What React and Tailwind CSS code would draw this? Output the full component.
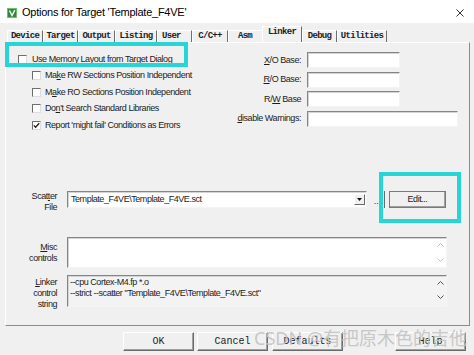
const tabs = [
    { label: "Device", w: "w-[36px]" },
    { label: "Target", w: "w-[35px]" },
    { label: "Output", w: "w-[37px]" },
    { label: "Listing", w: "w-[42px]" },
    { label: "User", w: "w-[35px] justify-start pl-[4px]" },
    { label: "C/C++", w: "w-[36px]" },
    { label: "Asm", w: "w-[34px] border-r-transparent" },
    { label: "Linker", w: "w-[40px]", active: true },
    { label: "Debug", w: "w-[35px]" },
    { label: "Utilities", w: "w-[50px]" },
];

const Check = ({ checked = false }) => (
    <span className="flex h-[9px] w-[9px] shrink-0 items-center justify-center border border-t-[#6f6f6f] border-l-[#6f6f6f] border-r-[#dcdcdc] border-b-[#dcdcdc] bg-white">
        {checked && (
            <svg width="7" height="7" viewBox="0 0 7 7">
                <path d="M0.8 3.4 L2.6 5.3 L6.2 1.2" fill="none" stroke="#1a1a1a" strokeWidth="1.3" />
            </svg>
        )}
    </span>
);

const Chevron = ({ up, color }) => (
    <svg width="7" height="4" viewBox="0 0 7 4">
        <path
            d={up ? "M0.5 3.5 L3.5 0.5 L6.5 3.5" : "M0.5 0.5 L3.5 3.5 L6.5 0.5"}
            fill="none"
            stroke={color}
            strokeWidth="1"
        />
    </svg>
);

const U = ({ children }) => <span className="underline underline-offset-[1px]">{children}</span>;

const sunken = "bg-white border border-t-[#858585] border-l-[#858585] border-r-[#f4f4f4] border-b-[#f4f4f4] shadow-[inset_1px_1px_0_#d4d4d4]";

const button = "flex items-center justify-center border border-t-white border-l-white border-r-[#6a6a6a] border-b-[#6a6a6a] shadow-[inset_-1px_-1px_0_#a0a0a0] bg-[#f0f0f0]";

export default function App() {

    return (

        <div className="relative h-[355px] w-[474px] overflow-hidden bg-[#f0f0f0] font-['Liberation_Sans',Arial,sans-serif] text-[#1c1c1c]">

            {/* title bar */}
            <div className="flex h-[23px] items-center bg-white pl-[7px] pr-[10px] pt-[2px]">
                <svg width="10" height="10" viewBox="0 0 10 10">
                    <rect x="0" y="0" width="10" height="10" fill="#2f8a3a" />
                    <rect x="0.5" y="0.5" width="9" height="9" fill="none" stroke="#6cc070" strokeWidth="1" />
                    <path d="M2.5 2.5 L5 7.5 L7.8 2.2" fill="none" stroke="#ffffff" strokeWidth="1.4" />
                </svg>
                <span className="ml-[5px] text-[11px] tracking-[-0.25px] text-black">
                    Options for Target 'Template_F4VE'
                </span>
                <svg className="ml-auto" width="8" height="8" viewBox="0 0 8 8">
                    <path d="M0.5 0.5 L7.5 7.5 M7.5 0.5 L0.5 7.5" stroke="#333" strokeWidth="1" />
                </svg>
            </div>

            {/* tabs */}
            <div className="flex h-[19px] items-end pl-[7px] font-['Liberation_Mono',monospace] text-[9px] font-bold leading-[11px] tracking-[-0.7px] text-[#1e1e1e]">
                {tabs.map((t) => (
                    <div
                        key={t.label}
                        className={
                            t.active
                                ? "flex h-[16px] w-[40px] items-start justify-center border-t border-l border-r border-t-white border-l-white border-r-[#6e6e6e]"
                                : "flex h-[12px] items-center justify-center border-t border-l border-r border-t-white border-l-white border-r-[#6e6e6e] " + t.w
                        }
                    >
                        {t.label}
                    </div>
                ))}
            </div>

            {/* panel */}
            <div className="ml-[5px] flex h-[284px] w-[465px] flex-col border border-t-white border-l-white border-r-[#8c8c8c] border-b-[#8c8c8c] text-[9px] leading-[11px] tracking-[-0.45px]">

                <div className="flex h-[148px]">

                    <div className="flex w-[224px] flex-col pt-[8px]">
                        <div className="flex h-[16.5px] items-center gap-[5px] pl-[12px]">
                            <Check />
                            <span>Use Memory Layout from Target Dialog</span>
                        </div>
                        <div className="flex h-[16.5px] items-center gap-[4px] pl-[26px]">
                            <Check />
                            <span>Ma<U>k</U>e RW Sections Position Independent</span>
                        </div>
                        <div className="flex h-[16.5px] items-center gap-[4px] pl-[26px]">
                            <Check />
                            <span>M<U>a</U>ke RO Sections Position Independent</span>
                        </div>
                        <div className="flex h-[16.5px] items-center gap-[4px] pl-[26px]">
                            <Check />
                            <span>Do<U>n</U>'t Search Standard Libraries</span>
                        </div>
                        <div className="flex h-[16.5px] items-center gap-[4px] pl-[26px]">
                            <Check checked />
                            <span>Report 'might fail' Conditions as Errors</span>
                        </div>
                    </div>

                    <div className="flex flex-col gap-[3.5px] pt-[9px]">
                        <div className="flex h-[16px] items-center">
                            <span className="w-[71px] whitespace-nowrap text-right"><U>X</U>/O Base:</span>
                            <div className={"ml-[6px] h-[16px] w-[93px] " + sunken} />
                        </div>
                        <div className="flex h-[16px] items-center">
                            <span className="w-[71px] whitespace-nowrap text-right"><U>R</U>/O Base:</span>
                            <div className={"ml-[6px] h-[16px] w-[93px] " + sunken} />
                        </div>
                        <div className="flex h-[16px] items-center">
                            <span className="w-[71px] whitespace-nowrap text-right">R/<U>W</U> Base</span>
                            <div className={"ml-[6px] h-[16px] w-[93px] " + sunken} />
                        </div>
                        <div className="flex h-[16px] items-center">
                            <span className="w-[71px] whitespace-nowrap text-right"><U>d</U>isable Warnings:</span>
                            <div className={"ml-[6px] h-[16px] w-[151px] " + sunken} />
                        </div>
                    </div>

                </div>

                {/* scatter file */}
                <div className="flex h-[17px]">
                    <div className="w-[51px] text-right">
                        <div>Scat<U>t</U>er</div>
                        <div>File</div>
                    </div>
                    <div className={"ml-[10px] flex h-[17px] w-[300px] items-center pl-[3px] pr-[1px] " + sunken}>
                        <span className="flex-1">Template_F4VE\Template_F4VE.sct</span>
                        <span className="flex h-[11px] w-[11px] items-center justify-center border border-t-white border-l-white border-r-[#6a6a6a] border-b-[#6a6a6a] bg-[#f0f0f0]">
                            <svg width="5" height="3" viewBox="0 0 5 3">
                                <path d="M0 0 L5 0 L2.5 3 Z" fill="#111" />
                            </svg>
                        </span>
                    </div>
                    <div className="ml-[4px] flex h-[17px] w-[14px] items-end justify-center border-r border-r-[#6a6a6a] pb-[1px] tracking-[0px]">
                        ...
                    </div>
                    <div className={"ml-[4px] h-[17px] w-[57px] outline outline-1 outline-[#7a7a7a] -outline-offset-1 " + button}>
                        Edit...
                    </div>
                </div>

                {/* misc controls */}
                <div className="mt-[29px] flex">
                    <div className="w-[51px] pt-[4.5px] text-right">
                        <div><U>M</U>isc</div>
                        <div>controls</div>
                    </div>
                    <div className={"ml-[10px] flex h-[31px] w-[380px] " + sunken}>
                        <div className="flex-1" />
                        <div className="flex w-[12px] flex-col items-center justify-between py-[5px]">
                            <Chevron up color="#b4b4b4" />
                            <Chevron color="#c4c4c4" />
                        </div>
                    </div>
                </div>

                {/* linker control string */}
                <div className="mt-[7px] flex">
                    <div className="w-[51px] pt-[1.5px] text-right">
                        <div><U>L</U>inker</div>
                        <div>control</div>
                        <div>string</div>
                    </div>
                    <div className="ml-[10px] flex h-[32px] w-[380px] border border-t-[#858585] border-l-[#858585] border-r-[#f4f4f4] border-b-[#f4f4f4] bg-[#f3f3f3] shadow-[inset_1px_1px_0_#d4d4d4]">
                        <div className="flex-1 pl-[2px] pt-[0.5px] whitespace-nowrap">
                            <div>--cpu Cortex-M4.fp *.o</div>
                            <div>--strict --scatter {'"'}Template_F4VE\Template_F4VE.sct{'"'}</div>
                        </div>
                        <div className="flex w-[12px] flex-col items-center justify-between pb-[7px] pt-[5px]">
                            <Chevron up color="#505050" />
                            <Chevron color="#505050" />
                        </div>
                    </div>
                </div>

            </div>

            {/* dialog buttons */}
            <div className="mt-[6px] flex h-[19px] pl-[123px] font-['Liberation_Mono',monospace] text-[10px] leading-[12px]">
                <div className={"w-[71px] " + button}>OK</div>
                <div className={"ml-[3px] w-[71px] " + button}>Cancel</div>
                <div className={"ml-[4px] w-[71px] " + button}>Defaults</div>
                <div className={"ml-[52px] w-[71px] " + button}>Help</div>
            </div>

            {/* annotation boxes */}
            <div className="absolute left-[5px] top-[42px] h-[25px] w-[183px] border-[4px] border-[#27d4d6]" />
            <div className="absolute left-[379px] top-[172px] h-[51px] w-[82px] border-[4px] border-[#27d4d6]" />

            {/* watermark */}
            <div className="absolute left-[254px] top-[329px] whitespace-nowrap font-['Noto_Sans','Noto_Sans_CJK_SC',sans-serif] text-[18px] leading-[19px] text-[#c2c2c2]/90">
                CSDN @有把原木色的吉他
            </div>

        </div>

    );

}
